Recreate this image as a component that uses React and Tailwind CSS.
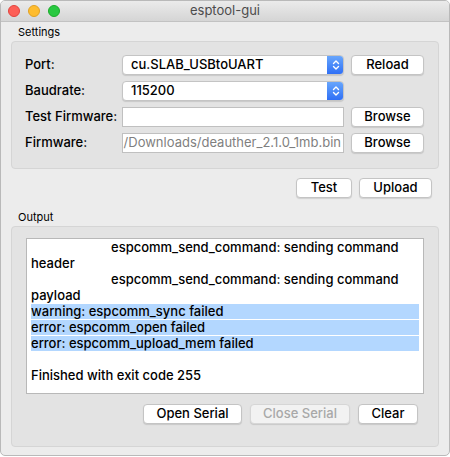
const font = { fontFamily: 'Inter, "Liberation Sans", Arial, sans-serif' }

function Button({ children, className = '', disabled = false }) {
  return (
    <div
      className={
        'flex items-center justify-center h-[20px] rounded-[4px] border text-[13px] shadow-[0_1px_1px_rgba(0,0,0,0.12)] ' +
        (disabled
          ? 'bg-[#f2f2f2] border-[#d6d6d6] text-[#a8a8a8] '
          : 'bg-white border-[#c4c4c4] text-black ') +
        className
      }
    >
      {children}
    </div>
  )
}

function Combo({ value }) {
  return (
    <div className="flex h-[20px] rounded-[4px] bg-white border border-[#c4c4c4] shadow-[0_1px_1px_rgba(0,0,0,0.12)] overflow-hidden">
      <div className="flex-1 flex items-center pl-[8px] text-[13px] text-black">{value}</div>
      <div className="w-[17px] -my-px -mr-px flex items-center justify-center bg-gradient-to-b from-[#6ba8fc] to-[#2d6cf5] rounded-r-[4px]">
        <svg width="8" height="12" viewBox="0 0 8 12" fill="none" stroke="white" strokeWidth="1.4" strokeLinecap="round" strokeLinejoin="round">
          <path d="M1.5 4.5 L4 2 L6.5 4.5" />
          <path d="M1.5 7.5 L4 10 L6.5 7.5" />
        </svg>
      </div>
    </div>
  )
}

const lines = [
  { text: 'espcomm_send_command: sending command', indent: true },
  { text: 'header' },
  { text: 'espcomm_send_command: sending command', indent: true },
  { text: 'payload' },
  { text: 'warning: espcomm_sync failed', hl: true },
  { text: 'error: espcomm_open failed', hl: true },
  { text: 'error: espcomm_upload_mem failed', hl: true },
  { text: '' },
  { text: 'Finished with exit code 255' },
]

export default function App() {
  return (
    <div className="w-[450px] h-[457px] bg-white" style={font}>
      <div className="h-[456px] rounded-[5px] border border-[#b9b9b9] bg-[#ececec] overflow-hidden flex flex-col">
        <div className="relative h-[21px] shrink-0 bg-gradient-to-b from-[#ebebeb] to-[#d5d5d5] border-b border-[#c2c2c2] flex items-center justify-center">
          <div className="absolute left-[7px] top-[4px] flex gap-[8px]">
            <span className="w-[12px] h-[12px] rounded-full bg-[#fd5f57] border border-[#e1443e]" />
            <span className="w-[12px] h-[12px] rounded-full bg-[#febc2e] border border-[#e0a124]" />
            <span className="w-[12px] h-[12px] rounded-full bg-[#28c840] border border-[#1aab29]" />
          </div>
          <span className="text-[13px] text-[#4c4c4c]">esptool-gui</span>
        </div>

        <div className="px-[10px]">
          <div className="mt-[4px] pl-[7px] text-[11px] leading-[13px] text-black">Settings</div>
          <div className="mt-[2px] h-[128px] rounded-[4px] border border-[#d5d5d5] bg-[#e3e3e3] pt-[13px] pl-[13px]">
            <div className="grid grid-cols-[97px_222px_80px] gap-y-[6px] items-center text-[13px] font-[450]">
              <div>Port:</div>
              <Combo value="cu.SLAB_USBtoUART" />
              <Button className="ml-[7px]">Reload</Button>

              <div>Baudrate:</div>
              <Combo value="115200" />
              <div />

              <div>Test Firmware:</div>
              <div className="h-[20px] bg-white border border-[#c0c0c0]" />
              <Button className="ml-[7px]">Browse</Button>

              <div>Firmware:</div>
              <div className="h-[20px] bg-white border border-[#c0c0c0] flex items-center justify-end overflow-hidden whitespace-nowrap pr-[2px] font-normal text-[#7f7f7f]">
                /Downloads/deauther_2.1.0_1mb.bin
              </div>
              <Button className="ml-[7px]">Browse</Button>
            </div>
          </div>

          <div className="mt-[9px] flex justify-end gap-[7px] pr-[7px] font-[450]">
            <Button className="w-[56px]">Test</Button>
            <Button className="w-[73px]">Upload</Button>
          </div>

          <div className="mt-[13px] pl-[7px] text-[11px] leading-[13px] text-black">Output</div>
          <div className="mt-[2px] h-[221px] rounded-[4px] border border-[#d5d5d5] bg-[#e3e3e3] pt-[11px] px-[14px]">
            <div className="h-[156px] bg-white border border-[#b8b8b8] px-[4px] pt-px text-[13px] font-[450] text-black">
              {lines.map((l, i) => (
                <div key={i} className="h-[16px]">
                  <div
                    className={
                      'h-[15px] leading-[15px] whitespace-nowrap ' +
                      (l.hl ? 'bg-[#b3d7ff] ' : '') +
                      (l.indent ? 'pl-[80px]' : '')
                    }
                  >
                    {l.text}
                  </div>
                </div>
              ))}
            </div>
            <div className="mt-[10px] flex justify-end gap-[8px] pr-[6px] font-[450]">
              <Button className="w-[99px]">Open Serial</Button>
              <Button className="w-[100px]" disabled>Close Serial</Button>
              <Button className="w-[60px]">Clear</Button>
            </div>
          </div>
        </div>
      </div>
    </div>
  )
}
